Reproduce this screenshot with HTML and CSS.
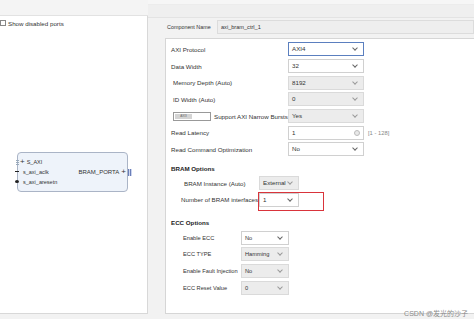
FILE: index.html
```html
<!DOCTYPE html>
<html>
<head>
<meta charset="utf-8">
<link rel="stylesheet" href="styles.css">
</head>
<body>
<div class="app">
  <div class="left">
    <div class="left-top"></div>
    <div class="left-panel">
      <label class="chk"><span class="box"></span>Show disabled ports</label>
      <div class="canvas">
        <div class="ip">
          <div class="ports-l">
            <div class="port"><span class="pin bus"></span><span class="plus">+</span>S_AXI</div>
            <div class="port"><span class="pin line"></span>s_axi_aclk</div>
            <div class="port"><span class="pin rst"></span>s_axi_aresetn</div>
          </div>
          <div class="ports-r">BRAM_PORTA <span class="plus">+</span><span class="busr"></span></div>
        </div>
      </div>
    </div>
  </div>
  <div class="right">
    <div class="tabs"><div class="tab1"></div><div class="tab2"></div></div>
    <div class="compname"><span class="cn-label">Component Name</span><span class="cn-input">axi_bram_ctrl_1</span></div>
    <div class="panel">
      <div class="rows">
        <div class="row"><span class="lbl">AXI Protocol</span><span class="sel focus">AXI4<i class="chev"></i></span></div>
        <div class="row"><span class="lbl">Data Width</span><span class="sel">32<i class="chev"></i></span></div>
        <div class="row"><span class="lbl ind">Memory Depth (Auto)</span><span class="sel dis">8192<i class="chev"></i></span></div>
        <div class="row"><span class="lbl ind">ID Width (Auto)</span><span class="sel dis">0<i class="chev"></i></span></div>
        <div class="row"><span class="lbl ind"><span class="toggle"><span class="knob">AXI3</span></span>Support AXI Narrow Bursts</span><span class="sel dis">Yes<i class="chev"></i></span></div>
        <div class="row"><span class="lbl">Read Latency</span><span class="sel">1<i class="clr"></i></span><span class="range">[1 - 128]</span></div>
        <div class="row"><span class="lbl">Read Command Optimization</span><span class="sel">No<i class="chev"></i></span></div>
      </div>
      <div class="sect s1">BRAM Options</div>
      <div class="rows sub">
        <div class="row"><span class="lbl2">BRAM Instance (Auto)</span><span class="sel2 dis">External<i class="chev"></i></span></div>
        <div class="row"><span class="lbl2 l2">Number of BRAM interfaces</span><span class="sel2 red">1<i class="chev"></i></span></div>
      </div>
      <div class="sect s2">ECC Options</div>
      <div class="rows ecc">
        <div class="row"><span class="lbl3">Enable ECC</span><span class="sel3">No<i class="chev"></i></span></div>
        <div class="row"><span class="lbl3">ECC TYPE</span><span class="sel3 dis">Hamming<i class="chev"></i></span></div>
        <div class="row"><span class="lbl3">Enable Fault Injection</span><span class="sel3 dis">No<i class="chev"></i></span></div>
        <div class="row"><span class="lbl3">ECC Reset Value</span><span class="sel3 dis">0<i class="chev"></i></span></div>
      </div>
    </div>
    <div class="wm">CSDN @发光的沙子</div>
  </div>
</div>
</body>
</html>
```
FILE: styles.css
```css
* { box-sizing: border-box; }
html, body { margin: 0; padding: 0; }
body {
  width: 474px; height: 319px; overflow: hidden;
  background: #f2f2f2;
  font-family: "Liberation Sans", Arial, sans-serif;
  font-size: 6.2px; color: #333; white-space: nowrap;
}
.app { display: flex; height: 319px; }
.left { width: 148px; display: flex; flex-direction: column; }
.left-top { height: 16px; background: #f4f4f4; border-bottom: 1px solid #e2e2e2; }
.left-panel {
  flex: 1; background: #fff; border-right: 1px solid #d8d8d8;
  margin-bottom: 5px; border-bottom: 1px solid #d8d8d8;
  display: flex; flex-direction: column;
}
.chk { display: flex; align-items: center; gap: 2px; height: 12px; margin-top: 1px; color: #333; }
.box { width: 6px; height: 6px; border: 1px solid #888; background: #fff; }
.canvas { flex: 1; padding: 123px 0 0 17px; }
.ip {
  width: 111px; height: 40px; border: 1px solid #aab4c6; border-radius: 4px;
  background: #eef3fa; position: relative; display: flex; justify-content: space-between;
  padding: 4px 0 0 2px;
}
.port { height: 10px; display: flex; align-items: center; position: relative; font-size: 5.5px; color: #333; }
.port:nth-child(n+2) { padding-left: 3px; }
.plus { font-size: 8px; color: #333; margin-right: 2px; line-height: 1; }
.pin { position: absolute; left: -5px; top: 4px; width: 4px; height: 1px; background: #222; }
.pin.bus { width: 3px; height: 6px; top: 2px; left: -4px; background: repeating-linear-gradient(0deg, #9ab 0 1px, transparent 1px 2px); }
.pin.rst { width: 4px; height: 3px; top: 3px; border-radius: 50%; background: #222; }
.ports-r { display: flex; align-items: center; height: 10px; margin-top: 10px; font-size: 6px; margin-right: -5px; }
.ports-r .plus { margin-left: 2px; }
.busr { width: 4px; height: 7px; background: repeating-linear-gradient(90deg, #6b7fb8 0 1px, #cdd6ef 1px 2px); }

.right { flex: 1; display: flex; flex-direction: column; position: relative; }
.tabs { height: 18px; display: flex; flex-direction: column; }
.tab1 { height: 5px; background: #f6f6f6; border-bottom: 1px solid #ececec; }
.tab2 { height: 13px; background: #efefef; border-bottom: 1px solid #e3e3e3; }
.compname { display: flex; align-items: center; height: 16px; padding-left: 19px; margin-top: 1px; }
.cn-label { width: 50px; font-size: 5.4px; }
.cn-input { flex: 1; height: 14px; background: #eeeeee; border: 1px solid #dcdcdc; padding-left: 3px; line-height: 12px; font-size: 5.6px; }
.panel {
  margin: 3px 0 5px 17px; flex: 1; background: #fff;
  border: 1px solid #d6d6d6; border-right: none;
  padding: 2px 0 0 5px;
}
.rows { display: flex; flex-direction: column; }
.row { display: flex; align-items: center; height: 16.7px; }
.lbl { width: 117px; }
.lbl.ind { padding-left: 2px; display: flex; align-items: center; }
.sel, .sel2, .sel3 {
  position: relative; height: 14px; border: 1px solid #d0d0d0; background: #fff;
  padding-left: 3px; line-height: 12px; display: block;
}
.sel { width: 76px; }
.sel.focus { border-color: #5b7fbf; }
.dis { background: #ececec; border-color: #dadada; }
.chev {
  position: absolute; right: 6px; top: 3px; width: 4px; height: 4px;
  border-right: 1px solid #666; border-bottom: 1px solid #666; transform: rotate(45deg);
}
.dis .chev { border-color: #9a9a9a; }
.clr { position: absolute; right: 3px; top: 3px; width: 6px; height: 6px; border-radius: 50%; border: 1px solid #bbb; background: #e8e8e8; }
.range { margin-left: 4px; color: #888; font-size: 5.8px; }
.toggle {
  width: 38px; height: 9px; border: 1px solid #999; background: #fff; margin-right: 3px;
  display: inline-flex; align-items: center; padding-left: 1px;
}
.knob { width: 17px; height: 5px; background: #d4d4d4; font-size: 3px; color: #666; text-align: center; line-height: 5px; }
.sect { font-weight: bold; color: #222; height: 12px; line-height: 12px; }
.s1 { margin-top: 5px; }
.s2 { margin-top: 9px; }
.sub .row { padding-left: 13px; }
.lbl2 { width: 75px; }
.lbl2.l2 { margin-left: -3px; width: 78px; }
.sel2 { width: 40px; }
.sel2.red::after {
  content: ""; position: absolute; left: -2px; top: -2px; width: 64px; height: 17px;
  border: 1px solid #d9343b;
}
.ecc .row { padding-left: 12px; }
.ecc { font-size: 5.7px; }
.lbl3 { width: 58px; }
.sel3 { width: 48px; }
.wm { position: absolute; right: 6px; bottom: 1px; color: #8a8a8a; font-size: 7px; font-family: "Liberation Sans", "Noto Sans CJK SC", sans-serif; }
```
